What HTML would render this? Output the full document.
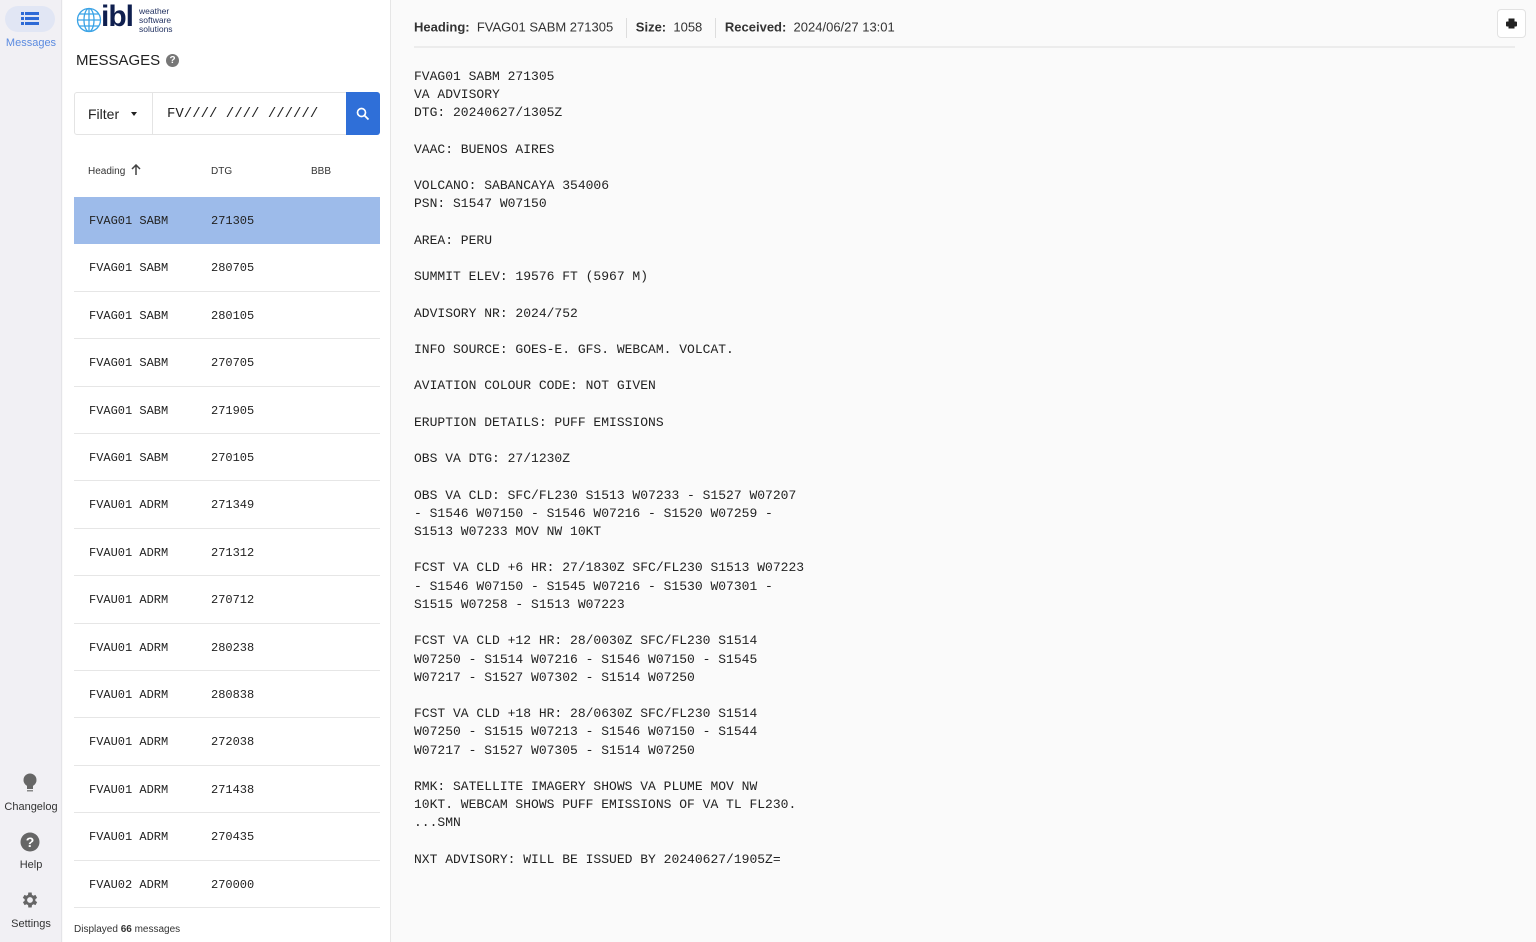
<!DOCTYPE html>
<html><head><style>
*{box-sizing:border-box;margin:0;padding:0}
body{width:1536px;height:942px;overflow:hidden;font-family:"Liberation Sans",sans-serif;background:#fafafa;position:relative}
.side{position:absolute;left:0;top:0;width:62px;height:942px;background:#f1f0f4;border-right:1px solid #e4e4e8}
.nav{position:absolute;left:0;width:62px;text-align:center;font-size:11px;color:#333}
.list{position:absolute;left:63px;top:0;width:328px;height:942px;background:#fff;border-right:1px solid #e6e6e6}
.mono{font-family:"Liberation Mono",monospace}
.row{position:absolute;left:11px;width:306px;height:47.4px;border-bottom:1px solid #e6e6e6;font-size:12px;color:#222}
.row span{position:absolute;top:17px}
.main{position:absolute;left:392px;top:0;right:0;height:942px;background:#fafafa}
pre{font-family:"Liberation Mono",monospace;font-size:13px;line-height:18.2px;color:#222;position:absolute;left:22px;top:68px}
</style></head><body>
<div class="side">
  <div style="position:absolute;left:5px;top:6px;width:50px;height:26px;border-radius:13px;background:#e1e6f4"></div>
  <svg style="position:absolute;left:21px;top:12px" width="18" height="14" viewBox="0 0 18 14"><g fill="#2d6ad6"><rect x="0" y="0" width="3" height="3"/><rect x="4" y="0" width="14" height="3"/><rect x="0" y="5" width="3" height="3"/><rect x="4" y="5" width="14" height="3"/><rect x="0" y="10" width="3" height="3"/><rect x="4" y="10" width="14" height="3"/></g></svg>
  <div class="nav" style="top:37px;color:#5b8be0">Messages</div>
  <svg style="position:absolute;left:22px;top:773px" width="16" height="22" viewBox="0 0 16 22"><circle cx="8" cy="7" r="6.5" fill="#666"/><rect x="5" y="12" width="6" height="4" fill="#666"/><rect x="5" y="17" width="6" height="1.5" fill="#888"/></svg>
  <div class="nav" style="top:801px">Changelog</div>
  <svg style="position:absolute;left:20px;top:832px" width="20" height="20" viewBox="0 0 20 20"><circle cx="10" cy="10" r="9.5" fill="#666"/><text x="10" y="15" font-size="14" font-weight="bold" fill="#fff" text-anchor="middle" font-family="Liberation Sans">?</text></svg>
  <div class="nav" style="top:859px">Help</div>
  <svg style="position:absolute;left:20px;top:890px" width="20" height="20" viewBox="0 0 24 24"><path fill="#666" d="M19.4 13a7.5 7.5 0 000-2l2.1-1.6-2-3.5-2.5 1a7 7 0 00-1.7-1L15 3h-4l-.4 2.9a7 7 0 00-1.7 1l-2.5-1-2 3.5L6.6 11a7.5 7.5 0 000 2l-2.1 1.6 2 3.5 2.5-1a7 7 0 001.7 1L11 21h4l.4-2.9a7 7 0 001.7-1l2.5 1 2-3.5zM13 15.5a3.5 3.5 0 110-7 3.5 3.5 0 010 7z" transform="translate(-1 0)"/></svg>
  <div class="nav" style="top:918px">Settings</div>
</div>
<div class="list">
  <svg style="position:absolute;left:13px;top:6px" width="26" height="28" viewBox="0 0 26 28"><g fill="none" stroke="#3ba3e6" stroke-width="1.3"><circle cx="13" cy="14" r="11.5"/><ellipse cx="13" cy="14" rx="5" ry="11.5"/><line x1="1.5" y1="14" x2="24.5" y2="14"/><line x1="3" y1="8" x2="23" y2="8"/><line x1="3" y1="20" x2="23" y2="20"/><line x1="13" y1="2.5" x2="13" y2="25.5"/></g></svg>
  <div style="position:absolute;left:38px;top:0px;font-size:30px;font-weight:bold;color:#0f1f4f;letter-spacing:-1px">ibl</div>
  <div style="position:absolute;left:76px;top:7px;font-size:8.5px;line-height:9px;color:#1f2f5f">weather<br>software<br>solutions</div>
  <div style="position:absolute;left:13px;top:52px;font-size:15px;font-weight:500;color:#222">MESSAGES</div>
  <div style="position:absolute;left:103px;top:54px;width:13px;height:13px;border-radius:50%;background:#777;color:#fff;font-size:10px;font-weight:bold;text-align:center;line-height:13px">?</div>
  <div style="position:absolute;left:11px;top:92px;width:306px;height:43px;border:1px solid #e4e4e4;border-radius:3px"></div>
  <div style="position:absolute;left:89px;top:92px;width:1px;height:43px;background:#e4e4e4"></div>
  <div style="position:absolute;left:25px;top:106px;font-size:14px;color:#222">Filter</div>
  <div style="position:absolute;left:68px;top:112px;width:0;height:0;border-left:3.5px solid transparent;border-right:3.5px solid transparent;border-top:4px solid #222"></div>
  <div class="mono" style="position:absolute;left:104px;top:106px;font-size:14px;color:#222">FV//// //// //////</div>
  <div style="position:absolute;left:283px;top:92px;width:34px;height:43px;background:#2f6fd8;border-radius:0 3px 3px 0"></div>
  <svg style="position:absolute;left:293px;top:107px" width="14" height="14" viewBox="0 0 14 14"><circle cx="5.5" cy="5.5" r="4" fill="none" stroke="#fff" stroke-width="1.7"/><line x1="8.5" y1="8.5" x2="12.5" y2="12.5" stroke="#fff" stroke-width="1.8"/></svg>
  <div style="position:absolute;left:25px;top:166px;font-size:10px;color:#333">Heading</div>
  <svg style="position:absolute;left:68px;top:164px" width="10" height="12" viewBox="0 0 10 12"><path d="M5 1v10M1 5l4-4 4 4" stroke="#444" stroke-width="1.5" fill="none"/></svg>
  <div style="position:absolute;left:148px;top:166px;font-size:10px;color:#333">DTG</div>
  <div style="position:absolute;left:248px;top:166px;font-size:10px;color:#333">BBB</div>
  <div class="row mono" style="top:197px;background:#9dbbea;border-bottom-color:#9dbbea"><span style="left:15px">FVAG01 SABM</span><span style="left:137px">271305</span></div>
  <div class="row mono" style="top:244.4px"><span style="left:15px">FVAG01 SABM</span><span style="left:137px">280705</span></div>
  <div class="row mono" style="top:291.8px"><span style="left:15px">FVAG01 SABM</span><span style="left:137px">280105</span></div>
  <div class="row mono" style="top:339.2px"><span style="left:15px">FVAG01 SABM</span><span style="left:137px">270705</span></div>
  <div class="row mono" style="top:386.6px"><span style="left:15px">FVAG01 SABM</span><span style="left:137px">271905</span></div>
  <div class="row mono" style="top:434px"><span style="left:15px">FVAG01 SABM</span><span style="left:137px">270105</span></div>
  <div class="row mono" style="top:481.4px"><span style="left:15px">FVAU01 ADRM</span><span style="left:137px">271349</span></div>
  <div class="row mono" style="top:528.8px"><span style="left:15px">FVAU01 ADRM</span><span style="left:137px">271312</span></div>
  <div class="row mono" style="top:576.2px"><span style="left:15px">FVAU01 ADRM</span><span style="left:137px">270712</span></div>
  <div class="row mono" style="top:623.6px"><span style="left:15px">FVAU01 ADRM</span><span style="left:137px">280238</span></div>
  <div class="row mono" style="top:671px"><span style="left:15px">FVAU01 ADRM</span><span style="left:137px">280838</span></div>
  <div class="row mono" style="top:718.4px"><span style="left:15px">FVAU01 ADRM</span><span style="left:137px">272038</span></div>
  <div class="row mono" style="top:765.8px"><span style="left:15px">FVAU01 ADRM</span><span style="left:137px">271438</span></div>
  <div class="row mono" style="top:813.2px"><span style="left:15px">FVAU01 ADRM</span><span style="left:137px">270435</span></div>
  <div class="row mono" style="top:860.6px"><span style="left:15px">FVAU02 ADRM</span><span style="left:137px">270000</span></div>
  <div style="position:absolute;left:11px;top:924px;font-size:10px;color:#333">Displayed <b>66</b> messages</div>
</div>
<div class="main">
  <div style="position:absolute;left:22px;top:18px;font-size:13px;color:#333;white-space:nowrap">
    <b>Heading:</b>&nbsp; FVAG01 SABM 271305 <span style="display:inline-block;width:1px;height:20px;background:#ddd;vertical-align:middle;margin:0 9px"></span><b>Size:</b>&nbsp; 1058 <span style="display:inline-block;width:1px;height:20px;background:#ddd;vertical-align:middle;margin:0 9px"></span><b>Received:</b>&nbsp; 2024/06/27 13:01
  </div>
  <div style="position:absolute;left:22px;top:46px;width:1101px;height:2px;background:#ececec"></div>
  <div style="position:absolute;left:1105px;top:9px;width:29px;height:29px;border:1px solid #e2e2e2;border-radius:4px;background:#fff"></div>
  <svg style="position:absolute;left:1114px;top:18px" width="11" height="11" viewBox="0 0 11 11"><rect x="2.5" y="0.5" width="6" height="3" fill="#222"/><rect x="0" y="3.5" width="11" height="5" rx="1" fill="#222"/><rect x="2.5" y="7" width="6" height="3.5" fill="#222"/></svg>
<pre>FVAG01 SABM 271305
VA ADVISORY
DTG: 20240627/1305Z

VAAC: BUENOS AIRES

VOLCANO: SABANCAYA 354006
PSN: S1547 W07150

AREA: PERU

SUMMIT ELEV: 19576 FT (5967 M)

ADVISORY NR: 2024/752

INFO SOURCE: GOES-E. GFS. WEBCAM. VOLCAT.

AVIATION COLOUR CODE: NOT GIVEN

ERUPTION DETAILS: PUFF EMISSIONS

OBS VA DTG: 27/1230Z

OBS VA CLD: SFC/FL230 S1513 W07233 - S1527 W07207
- S1546 W07150 - S1546 W07216 - S1520 W07259 -
S1513 W07233 MOV NW 10KT

FCST VA CLD +6 HR: 27/1830Z SFC/FL230 S1513 W07223
- S1546 W07150 - S1545 W07216 - S1530 W07301 -
S1515 W07258 - S1513 W07223

FCST VA CLD +12 HR: 28/0030Z SFC/FL230 S1514
W07250 - S1514 W07216 - S1546 W07150 - S1545
W07217 - S1527 W07302 - S1514 W07250

FCST VA CLD +18 HR: 28/0630Z SFC/FL230 S1514
W07250 - S1515 W07213 - S1546 W07150 - S1544
W07217 - S1527 W07305 - S1514 W07250

RMK: SATELLITE IMAGERY SHOWS VA PLUME MOV NW
10KT. WEBCAM SHOWS PUFF EMISSIONS OF VA TL FL230.
...SMN

NXT ADVISORY: WILL BE ISSUED BY 20240627/1905Z=</pre>
</div>
</body></html>
